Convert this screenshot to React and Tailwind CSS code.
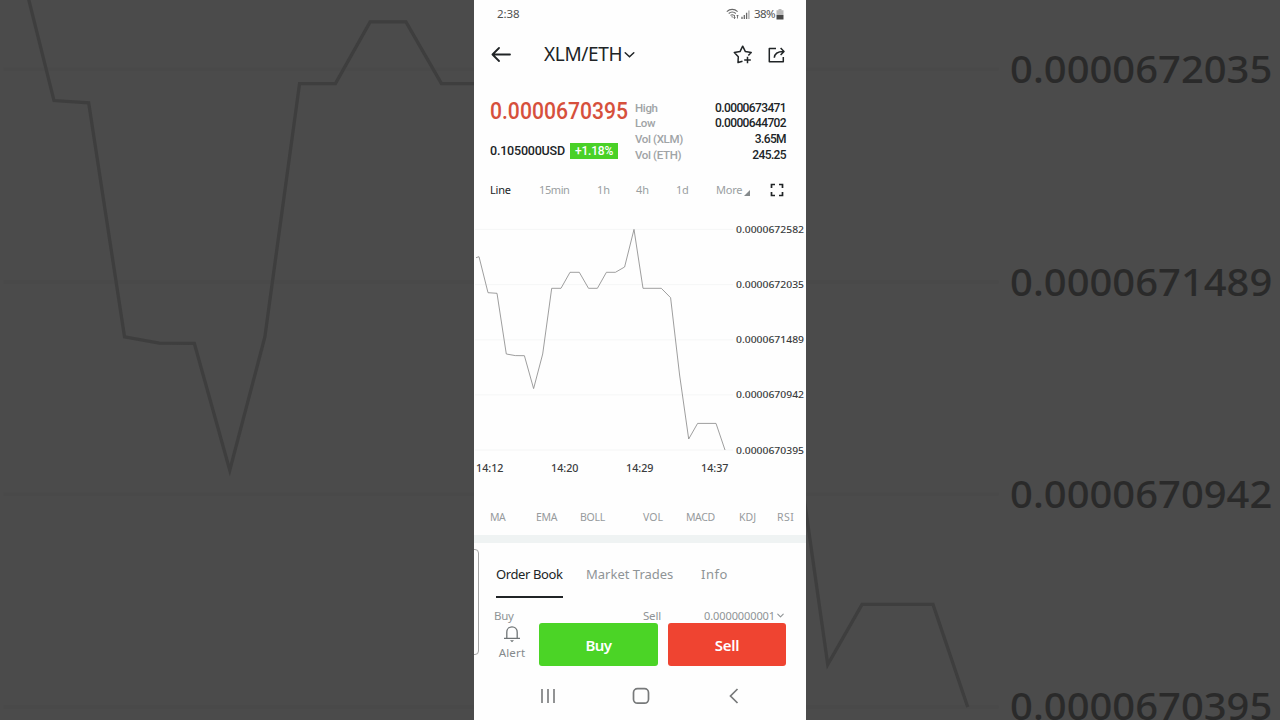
import { ChevronDown } from "lucide-react";

const linePoints = [
  [476, 257.7], [479, 256.7], [488, 292.7], [497, 293.3], [506.3, 354], [515.3, 355.6],
  [524.4, 355.7], [533.6, 388.6], [542.7, 354], [551.7, 288.3], [561, 288.3], [570, 272.3],
  [579.3, 272.3], [588.5, 288.3], [597.4, 288.3], [606.4, 272.3], [615.4, 272.3],
  [624.6, 267], [634, 229.4], [643, 288.3], [661.3, 288.3], [670.6, 297.7], [679.6, 375],
  [688.7, 439], [697.6, 423.4], [716, 423.4], [725, 450],
];

const priceLabels = [
  ["0.0000672582", 229.4],
  ["0.0000672035", 284.6],
  ["0.0000671489", 339.8],
  ["0.0000670942", 394.8],
  ["0.0000670395", 450],
];

const timeLabels = [
  ["14:12", 476],
  ["14:20", 551],
  ["14:29", 626],
  ["14:37", 701],
];

const stats = [
  ["High", "0.0000673471"],
  ["Low", "0.0000644702"],
  ["Vol (XLM)", "3.65M"],
  ["Vol (ETH)", "245.25"],
];

function PriceChart({ viewBox, className, line, grid, label, prices = priceLabels, times = timeLabels }) {
  return (
    <svg viewBox={viewBox} className={className} fontFamily="'Noto Sans', sans-serif" fontWeight="500">
      {prices.map(([text, y]) => (
        <g key={text}>
          <path d={`M475 ${y}H733`} stroke={grid} strokeWidth="0.8" />
          <text x="736" y={y + 3.5} fontSize="9.7" textLength="68" lengthAdjust="spacingAndGlyphs" fill={label}>
            {text}
          </text>
        </g>
      ))}
      <polyline points={linePoints.map((p) => p.join(",")).join(" ")} fill="none" stroke={line} strokeWidth="0.85" />
      {times.map(([text, x]) => (
        <text key={text} x={x} y="472" fontSize="10" textLength="27.5" lengthAdjust="spacingAndGlyphs" fill={label}>
          {text}
        </text>
      ))}
    </svg>
  );
}

function StatusIcons() {
  return (
    <svg width="26" height="14" viewBox="0 0 26 14" fill="none" stroke="#686868">
      <path d="M.8 4.6C4 1.6 8.4 1.6 11.6 4.6M2.7 6.5C4.9 4.6 7.6 4.6 9.8 6.5M4.5 8.4C5.6 7.5 6.8 7.5 7.9 8.4" strokeWidth="1.1" />
      <path d="M5 9.5L6.2 10.800L7.3 9.5Z" fill="#686868" stroke="none" />
      <path d="M8.500 8V11.500M7.600 10.400L8.500 11.600L9.400 10.400M11.500 11.500V8M10.600 9.100L11.500 8L12.400 9.100" strokeWidth=".9" />
      <path d="M16 12V9.8M18.300 12V8M20.600 12V5.800" strokeWidth="1.300" />
      <path d="M22.900 12V3.500" stroke="#a5a5a5" strokeWidth="1.300" />
    </svg>
  );
}

export default function App() {
  return (
    <div className="relative h-[720px] w-[1280px] overflow-hidden bg-[#4b4b4b] font-['Noto_Sans',sans-serif]">
      {/* enlarged, dimmed chart behind the phone */}
      <PriceChart
        viewBox="474 266.64 332 186.72"
        className="absolute inset-0 h-[720px] w-[1280px]"
        line="#3e3e3e"
        grid="#494949"
        label="#2a2a2a"
        prices={priceLabels.slice(1)}
        times={[]}
      />

      <div className="relative mx-auto flex h-[720px] w-[332px] flex-col overflow-hidden bg-[#fefefe] text-[#202426]">
        {/* status bar */}
        <div className="flex h-[28px] shrink-0 items-center justify-between pl-[23px] pr-[22px] text-[11.5px] text-[#505050]">
          <span className="tracking-[-0.1px]">2:38</span>
          <div className="flex items-center">
            <StatusIcons />
            <span className="ml-[2px] tracking-[-0.6px]">38%</span>
            <svg width="8" height="11" viewBox="0 0 8 11" className="ml-px">
              <path d="M2.5 0H5.5V1.2H7.5V6H.5V1.2H2.5Z" fill="#b9b9b9" />
              <path d="M.5 6H7.5V10.5H.5Z" fill="#484848" />
            </svg>
          </div>
        </div>

        {/* header */}
        <div className="flex h-[53px] shrink-0 items-center pl-[16px] pr-[20px]">
          <svg width="22" height="20" viewBox="0 0 22 20" fill="none" stroke="#202426" strokeWidth="1.8" strokeLinecap="round" strokeLinejoin="round">
            <path d="M20 9.500H3M9 3L2.500 9.500L9 16" />
          </svg>
          <span className="ml-[32px] text-[19px] leading-none tracking-[-0.35px]">XLM/ETH</span>
          <svg width="11" height="8" viewBox="0 0 11 8" fill="none" stroke="#202426" strokeWidth="1.5" strokeLinecap="round" className="ml-[2px]">
            <path d="M1.2 1.8L5.500 5.800L9.800 1.800" />
          </svg>
          <div className="ml-auto flex items-center gap-[15px]">
            <svg width="20" height="20" viewBox="0 0 20 20" fill="none" stroke="#202426" strokeWidth="1.500" strokeLinejoin="round">
              <path d="M9.500 16.200L5 17.500L5.300 11.700L1.300 7.600L7 6.600L9.700 1.200L12.400 6.600L18.200 7.600L15.300 10.600" />
              <path d="M14.500 11.800V18.200M11.200 15H17.800" />
            </svg>
            <svg width="18" height="18" viewBox="0 0 18 18" fill="none" stroke="#202426" strokeWidth="1.500" strokeLinejoin="round">
              <path d="M8 2.500H1.300V15.800H15.300V11" />
              <path d="M6.300 11.800C6.500 7.500 9.500 5.500 15.500 5.500M12.600 2L16 5.500L12.600 9" />
            </svg>
          </div>
        </div>

        {/* price summary */}
        <div className="flex h-[92px] shrink-0 pl-[16px] pr-[20px] font-['Roboto',sans-serif]">
          <div className="w-[144px] shrink-0 pt-[16px]">
            <div className="w-max origin-left scale-x-[0.88] text-[24px] font-medium leading-[28px] text-[#d6503c]">
              0.0000670395
            </div>
            <div className="mt-[18px] flex items-center">
              <span className="w-[80px] text-[12.500px] font-medium leading-[16px] tracking-[-0.2px]">0.105000USD</span>
              <span className="flex h-[16px] w-[48px] shrink-0 items-center justify-center bg-[#49d127] text-[12px] font-medium tracking-[-0.2px] text-white">
                +1.18%
              </span>
            </div>
          </div>
          <div className="flex flex-1 flex-col pt-[19.500px] text-[12px] leading-[15.700px]">
            {stats.map(([name, value]) => (
              <div key={name} className="flex justify-between">
                <span className="pl-px text-[11.5px] font-medium tracking-[-0.35px] text-[#a0a4a6]">{name}</span>
                <span className="font-medium tracking-[-0.62px]">{value}</span>
              </div>
            ))}
          </div>
        </div>

        {/* intervals */}
        <div className="flex h-[34px] shrink-0 items-center pl-[16px] pr-[22px] pt-px text-[11px] text-[#9a9fa1]">
          <span className="w-[49px] tracking-[-0.2px] text-[#202426]">Line</span>
          <span className="w-[58px] tracking-[-0.4px]">15min</span>
          <span className="w-[39px]">1h</span>
          <span className="w-[40px]">4h</span>
          <span className="w-[40px] tracking-[-0.3px]">1d</span>
          <span className="tracking-[-0.2px]">More</span>
          <svg width="6" height="6" viewBox="0 0 6 6" className="ml-[2px] mt-[5px]">
            <path d="M6 0V6H0Z" fill="#858a8c" />
          </svg>
          <svg width="14" height="14" viewBox="0 0 14 14" fill="none" stroke="#202426" strokeWidth="1.700" className="mb-px ml-auto">
            <path d="M1.500 5V1.500H5M9 1.500H12.500V5M12.500 9V12.500H9M5 12.500H1.500V9" />
          </svg>
        </div>

        <PriceChart
          viewBox="474 207 332 278"
          className="h-[278px] w-[332px] shrink-0"
          line="#8c8c8c"
          grid="#f3f4f4"
          label="#3a3c3d"
        />

        {/* indicators */}
        <div className="flex h-[50px] shrink-0 items-center pl-[16px] pt-[15px] text-[10.5px] text-[#979b9d]">
          <span className="w-[46px] tracking-[-0.4px]">MA</span>
          <span className="w-[44px] tracking-[-0.3px]">EMA</span>
          <span className="w-[63px] tracking-[-0.3px]">BOLL</span>
          <span className="w-[43px]">VOL</span>
          <span className="w-[53px] tracking-[-0.4px]">MACD</span>
          <span className="w-[38px]">KDJ</span>
          <span className="tracking-[0.5px]">RSI</span>
        </div>
        <div className="h-[8px] shrink-0 bg-[#eff3f3]" />

        {/* tabs */}
        <div className="flex h-[55px] shrink-0 items-stretch pl-[22px] text-[13px] text-[#8f9496]">
          <div className="mr-[23px] w-[67px] whitespace-nowrap border-b-2 border-[#202426] pt-[21px] leading-[20px] tracking-[-0.4px] text-[#202426]">
            Order Book
          </div>
          <div className="w-[115px] pt-[21px] leading-[20px]">Market Trades</div>
          <div className="pt-[21px] leading-[20px] tracking-[0.5px]">Info</div>
        </div>

        {/* order book header */}
        <div className="flex h-[25px] shrink-0 items-end px-[20px] text-[11.5px] leading-[14px] text-[#8f9496]">
          <span className="w-[149px] tracking-[-0.3px]">Buy</span>
          <span className="tracking-[-0.2px]">Sell</span>
          <span className="ml-auto text-[11px] tracking-[-0.1px]">0.0000000001</span>
          <ChevronDown size={11} strokeWidth={2.4} className="mb-[2px]" />
        </div>

        {/* actions */}
        <div className="flex h-[43px] shrink-0 pr-[20px]">
          <div className="flex w-[65px] flex-col items-center pl-[11px] text-[11.5px] leading-[16px] text-[#858a8c]">
            <svg width="18" height="18" viewBox="0 0 18 18" fill="none" stroke="#6f7476" strokeWidth="1.3" className="mt-[2px]">
              <path d="M1 13.300H17M3.800 13.300V7.300C3.800 0 14.200 0 14.200 7.300V13.300" />
              <path d="M7 15.200H11L9 17.200Z" fill="#6f7476" stroke="none" />
            </svg>
            <span className="mt-[2px] tracking-[0.2px]">Alert</span>
          </div>
          <button className="w-[119px] rounded-[3px] bg-[#4bd426] pt-px text-[15px] font-semibold tracking-[-0.5px] text-white">Buy</button>
          <button className="ml-[10px] w-[118px] rounded-[3px] bg-[#ef4431] pt-px text-[15px] font-semibold tracking-[-0.3px] text-white">Sell</button>
        </div>

        {/* android navigation */}
        <div className="flex flex-1 items-center justify-between pl-[66px] pr-[63px] pt-[5px] text-[#77797a]">
          <svg width="16" height="16" viewBox="0 0 16 16" stroke="currentColor" strokeWidth="1.600">
            <path d="M2 1V15M8 1V15M14 1V15" />
          </svg>
          <svg width="18" height="18" viewBox="0 0 18 18" fill="none" stroke="currentColor" strokeWidth="1.700">
            <rect x="1.500" y="1.700" width="15" height="14.500" rx="4" />
          </svg>
          <svg width="18" height="18" viewBox="0 0 18 18" fill="none" stroke="currentColor" strokeWidth="1.700">
            <path d="M12.500 2L5.500 9L12.500 16" />
          </svg>
        </div>

        {/* edge panel handle */}
        <div className="absolute left-[-6px] top-[549px] h-[106px] w-[11px] rounded-[4px] border border-[#a5a5a5]" />
      </div>
    </div>
  );
}
